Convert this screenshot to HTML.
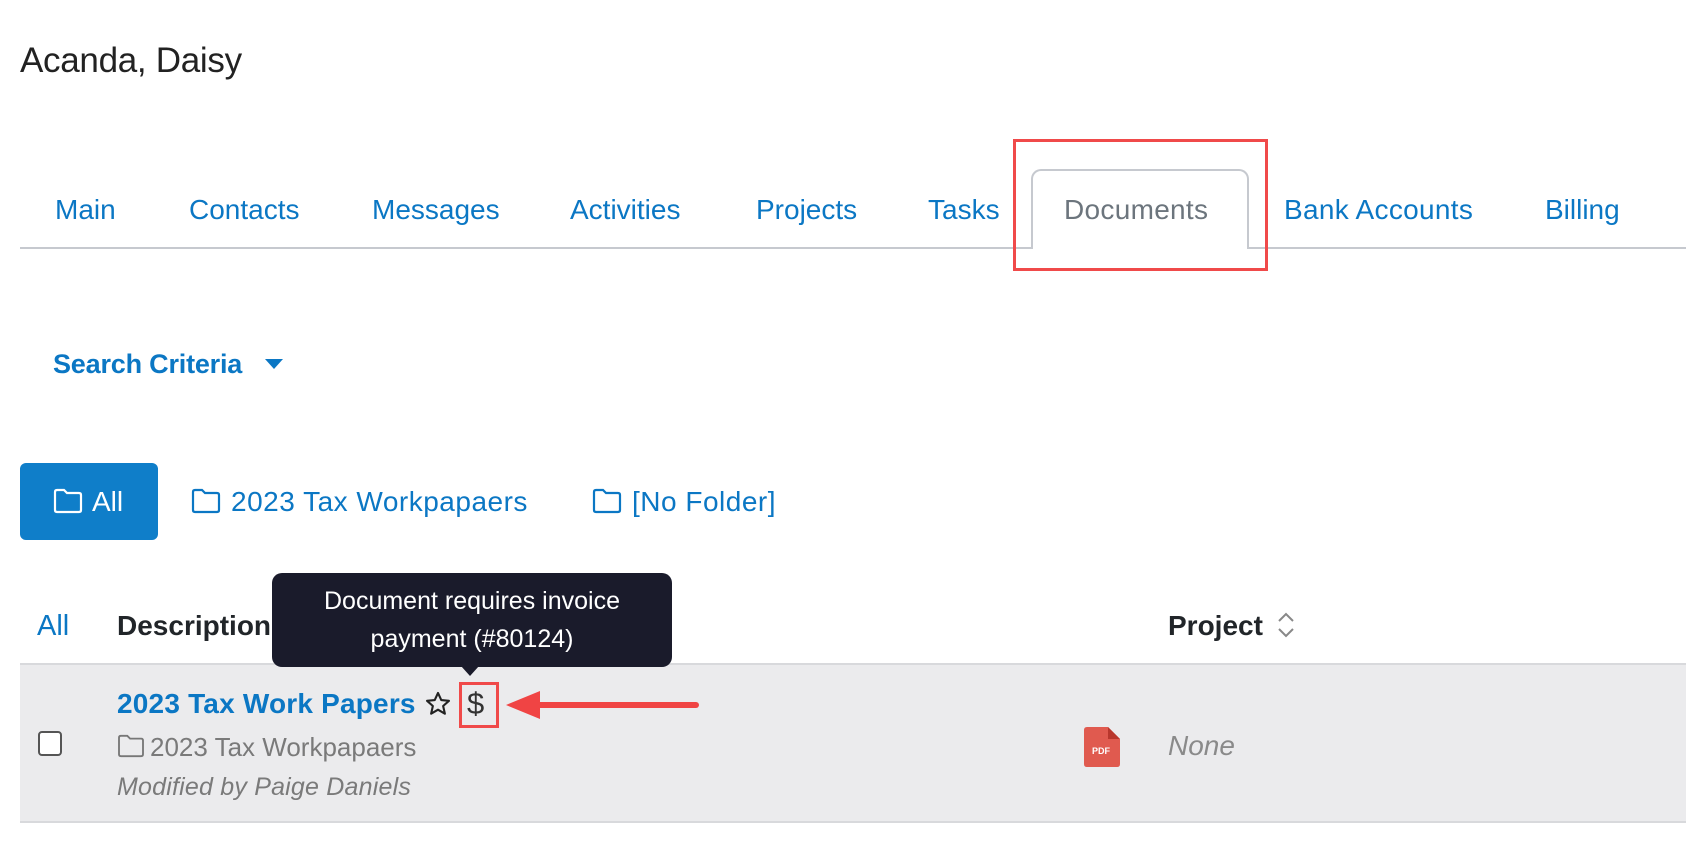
<!DOCTYPE html>
<html><head><meta charset="utf-8"><style>
*{margin:0;padding:0;box-sizing:border-box}
body{width:1686px;height:845px;background:#fff;font-family:"Liberation Sans",sans-serif;position:relative;overflow:hidden;color:#212529}
.a{position:absolute;white-space:nowrap}
.tab{position:absolute;top:193px;font-size:28px;color:#0b77c4;line-height:34px}
.blue{color:#0b77c4}
</style></head><body>
<div class="a" style="left:20px;top:40px;font-size:35px;line-height:42px;color:#222;letter-spacing:-0.3px">Acanda, Daisy</div>

<div class="a" style="left:20px;top:247px;width:1666px;height:2px;background:#c6c9cf"></div>
<div class="a" style="left:1031px;top:169px;width:218px;height:80px;background:#fff;border:2px solid #c6c9cf;border-bottom:none;border-radius:10px 10px 0 0"></div>
<div class="tab" style="left:55px">Main</div>
<div class="tab" style="left:189px">Contacts</div>
<div class="tab" style="left:372px">Messages</div>
<div class="tab" style="left:570px">Activities</div>
<div class="tab" style="left:756px">Projects</div>
<div class="tab" style="left:928px">Tasks</div>
<div class="tab" style="left:1064px;color:#6c757d;letter-spacing:0.3px">Documents</div>
<div class="tab" style="left:1284px;letter-spacing:0.3px">Bank Accounts</div>
<div class="tab" style="left:1545px">Billing</div>
<div class="a" style="left:1013px;top:139px;width:255px;height:132px;border:3px solid #f04a4a"></div>

<div class="a blue" style="left:53px;top:347px;font-size:27px;line-height:34px;font-weight:bold;letter-spacing:-0.2px">Search Criteria</div>
<div class="a" style="left:265px;top:359px;width:0;height:0;border-left:9px solid transparent;border-right:9px solid transparent;border-top:10px solid #0b77c4"></div>

<div class="a" style="left:20px;top:463px;width:138px;height:77px;background:#0f7ec9;border-radius:6px"></div>
<svg class="a" style="left:53px;top:488px" width="30" height="26" viewBox="0 0 30 26"><path d="M2 4 Q2 2 4 2 H11 L14 5 H26 Q28 5 28 7 V22 Q28 24 26 24 H4 Q2 24 2 22 Z" fill="none" stroke="#fff" stroke-width="2.2"/></svg>
<div class="a" style="left:92px;top:485px;font-size:28px;line-height:34px;color:#fff">All</div>

<svg class="a" style="left:191px;top:488px" width="30" height="26" viewBox="0 0 30 26"><path d="M2 4 Q2 2 4 2 H11 L14 5 H26 Q28 5 28 7 V22 Q28 24 26 24 H4 Q2 24 2 22 Z" fill="none" stroke="#0b77c4" stroke-width="2.2"/></svg>
<div class="a blue" style="left:231px;top:485px;font-size:28px;line-height:34px;letter-spacing:0.5px">2023 Tax Workpapaers</div>
<svg class="a" style="left:592px;top:488px" width="30" height="26" viewBox="0 0 30 26"><path d="M2 4 Q2 2 4 2 H11 L14 5 H26 Q28 5 28 7 V22 Q28 24 26 24 H4 Q2 24 2 22 Z" fill="none" stroke="#0b77c4" stroke-width="2.2"/></svg>
<div class="a blue" style="left:632px;top:485px;font-size:28px;line-height:34px;letter-spacing:0.5px">[No Folder]</div>

<div class="a blue" style="left:37px;top:609px;font-size:29px;line-height:34px">All</div>
<div class="a" style="left:117px;top:609px;font-size:28px;line-height:34px;font-weight:bold;color:#212529">Description</div>
<svg class="a" style="left:284px;top:608px" width="20" height="14" viewBox="0 0 20 14"><path d="M3 11 L10 4 L17 11" fill="none" stroke="#333" stroke-width="2.2"/></svg>
<div class="a" style="left:1168px;top:609px;font-size:28px;line-height:34px;font-weight:bold;color:#212529">Project</div>
<svg class="a" style="left:1275px;top:610px" width="22" height="30" viewBox="0 0 22 30"><path d="M4 11 L11 4 L18 11 M4 19 L11 26 L18 19" fill="none" stroke="#888" stroke-width="2"/></svg>

<div class="a" style="left:20px;top:663px;width:1666px;height:160px;background:#ebebed;border-top:2px solid #d8d9dc;border-bottom:2px solid #d8d9dc"></div>
<div class="a" style="left:38px;top:731px;width:24px;height:25px;border:2px solid #555;border-radius:4px;background:#fff"></div>
<div class="a blue" style="left:117px;top:687px;font-size:28px;line-height:34px;font-weight:bold;letter-spacing:0.2px">2023 Tax Work Papers</div>
<svg class="a" style="left:423px;top:690px" width="30" height="28" viewBox="0 0 24 24"><path d="M12 2.5 L14.8 8.6 L21.4 9.3 L16.4 13.7 L17.9 20.3 L12 16.9 L6.1 20.3 L7.6 13.7 L2.6 9.3 L9.2 8.6 Z" fill="none" stroke="#222" stroke-width="1.8" stroke-linejoin="round"/></svg>
<div class="a" style="left:467px;top:685px;font-size:31px;line-height:38px;color:#333">$</div>
<div class="a" style="left:459px;top:682px;width:40px;height:46px;border:3px solid #f04a4a"></div>
<svg class="a" style="left:500px;top:688px" width="205" height="34" viewBox="0 0 205 34"><path d="M38 17 H196" stroke="#f04444" stroke-width="6" stroke-linecap="round"/><path d="M6 17 L40 3 L40 31 Z" fill="#f04444"/></svg>

<svg class="a" style="left:117px;top:734px" width="28" height="24" viewBox="0 0 30 26"><path d="M2 4 Q2 2 4 2 H11 L14 5 H26 Q28 5 28 7 V22 Q28 24 26 24 H4 Q2 24 2 22 Z" fill="none" stroke="#777" stroke-width="2"/></svg>
<div class="a" style="left:150px;top:731px;font-size:26px;line-height:32px;color:#7a7a7a">2023 Tax Workpapaers</div>
<div class="a" style="left:117px;top:771px;font-size:25px;line-height:32px;color:#7a7a7a;font-style:italic;letter-spacing:0.2px">Modified by Paige Daniels</div>

<svg class="a" style="left:1084px;top:727px" width="36" height="40" viewBox="0 0 36 40"><path d="M3 0 H24 L36 12 V37 Q36 40 33 40 H3 Q0 40 0 37 V3 Q0 0 3 0 Z" fill="#e05a4f"/><path d="M24 0 L36 12 H24 Z" fill="#b8372d"/><text x="17" y="27" font-size="9" font-weight="bold" fill="#fff" text-anchor="middle" font-family="Liberation Sans,sans-serif">PDF</text></svg>
<div class="a" style="left:1168px;top:729px;font-size:28px;line-height:34px;color:#8a8a8a;font-style:italic">None</div>

<div class="a" style="left:272px;top:573px;width:400px;height:94px;background:#1a1b2b;border-radius:10px;color:#fff;font-size:25px;line-height:38px;text-align:center;padding-top:9px">Document requires invoice<br>payment (#80124)</div>
<div class="a" style="left:461px;top:666px;width:0;height:0;border-left:9px solid transparent;border-right:9px solid transparent;border-top:10px solid #1a1b2b"></div>
</body></html>
